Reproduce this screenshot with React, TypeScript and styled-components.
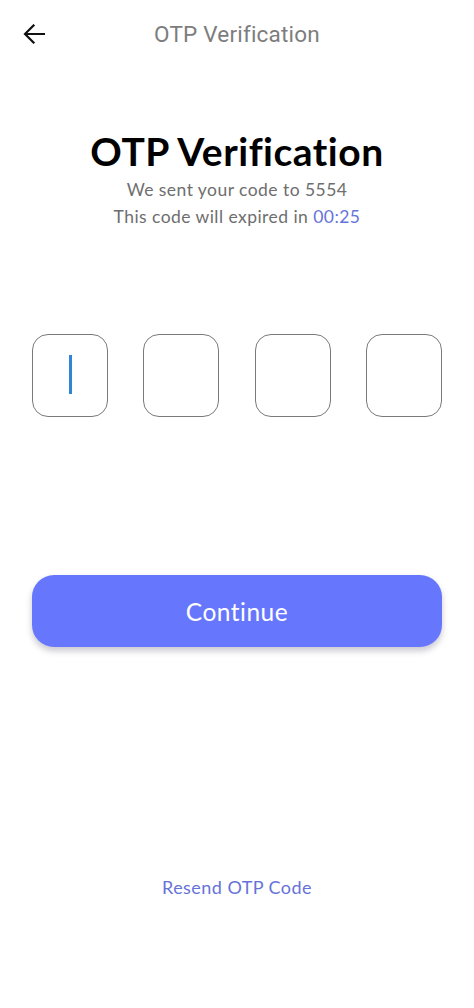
import React from 'react';
import styled, { createGlobalStyle } from 'styled-components';

const GlobalStyle = createGlobalStyle`
  html, body {
    margin: 0;
    padding: 0;
    background: #ffffff;
  }
  * { box-sizing: border-box; }
`;

const App: React.FC = () => {
  const digits = ['', '', '', ''];
  return (
    <>
      <GlobalStyle />
      <Screen>
        <TopBar>
          <BackButton aria-label="Back">
            <svg width="22" height="20" viewBox="0 0 22 20" fill="none">
              <path d="M21 10H2.5M10.5 1.5L2 10l8.5 8.5" stroke="#111" strokeWidth="2.2" strokeLinecap="square" />
            </svg>
          </BackButton>
          <BarTitle>OTP Verification</BarTitle>
        </TopBar>

        <Heading>
          <Title>OTP Verification</Title>
          <Sub>We sent your code to 5554</Sub>
          <Sub>
            This code will expired in <Timer>00:25</Timer>
          </Sub>
        </Heading>

        <CodeRow>
          {digits.map((d, i) => (
            <CodeBox key={i}>{i === 0 ? <Caret /> : d}</CodeBox>
          ))}
        </CodeRow>

        <ContinueButton>Continue</ContinueButton>

        <Resend>Resend OTP Code</Resend>
      </Screen>
    </>
  );
};

const Screen = styled.div`
  width: 474px;
  height: 1008px;
  display: flex;
  flex-direction: column;
  align-items: center;
  background: #ffffff;
  font-family: 'Lato', 'Noto Sans', sans-serif;
`;

const TopBar = styled.div`
  position: relative;
  width: 100%;
  height: 68px;
  display: flex;
  align-items: center;
  justify-content: center;
`;

const BackButton = styled.button`
  position: absolute;
  left: 23px;
  top: 24px;
  border: none;
  background: none;
  padding: 0;
  display: flex;
`;

const BarTitle = styled.div`
  font-family: 'Roboto', sans-serif;
  font-size: 22.5px;
  color: #7d7d7d;
  letter-spacing: 0.2px;
`;

const Heading = styled.div`
  margin-top: 60px;
  display: flex;
  flex-direction: column;
  align-items: center;
`;

const Title = styled.h1`
  margin: 0 0 2px;
  font-size: 39px;
  font-weight: 700;
  color: #000;
  line-height: 46px;
  letter-spacing: 0.5px;
`;

const Sub = styled.div`
  font-size: 17.5px;
  color: #6e6e6e;
  line-height: 27px;
  letter-spacing: 0.45px;
`;

const Timer = styled.span`
  color: #6674d9;
`;

const CodeRow = styled.div`
  margin-top: 104px;
  width: 100%;
  padding: 0 32px;
  display: flex;
  justify-content: space-between;
`;

const CodeBox = styled.div`
  width: 76px;
  height: 83px;
  border: 1.4px solid #7a7a7a;
  border-radius: 16px;
  display: flex;
  align-items: center;
  justify-content: center;
`;

const Caret = styled.span`
  width: 3px;
  height: 39px;
  background: #2f86d6;
  margin-top: -2px;
`;

const ContinueButton = styled.button`
  margin-top: 158px;
  width: 410px;
  height: 72px;
  border: none;
  border-radius: 22px;
  background: #6777fd;
  color: #ffffff;
  font-family: 'Lato', 'Noto Sans', sans-serif;
  font-size: 24.5px;
  letter-spacing: 0.5px;
  box-shadow: 0 4px 6px rgba(60, 60, 90, 0.28);
`;

const Resend = styled.div`
  margin-top: 229px;
  font-size: 18px;
  color: #6672d8;
  letter-spacing: 0.45px;
`;

export default App;
